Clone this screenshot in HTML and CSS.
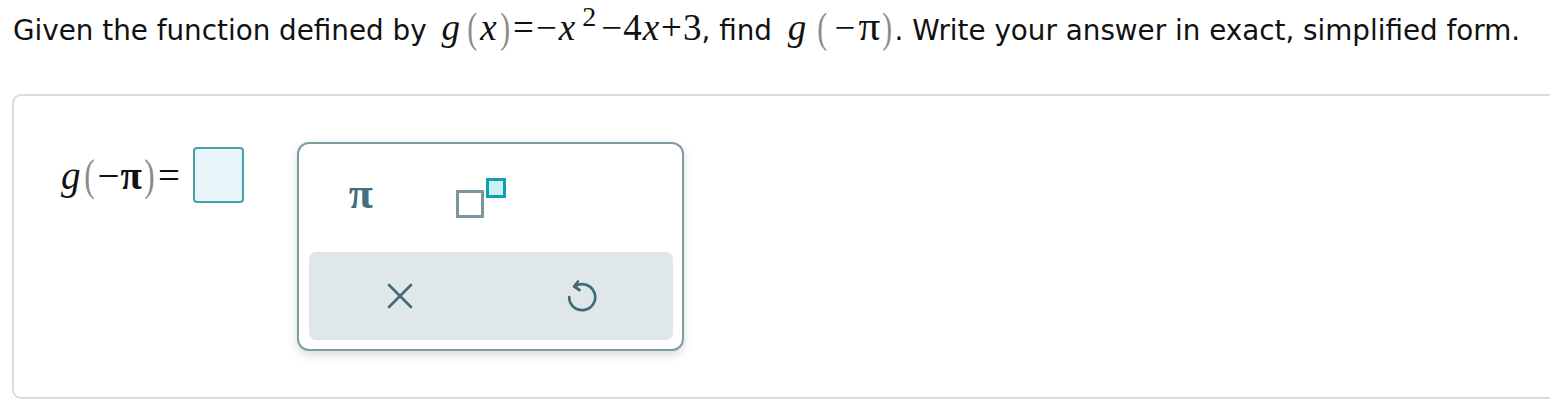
FILE: index.html
```html
<!DOCTYPE html>
<html>
<head>
<meta charset="utf-8">
<link rel="stylesheet" href="styles.css">
</head>
<body>
<div class="question">Given the function defined by <span class="math"><i class="v g">g</i><span class="paren p1">(</span><i class="v">x</i><span class="paren">)</span><span class="op">=</span><span class="neg">−</span><i class="v">x</i><span class="sup">2</span><span class="op">−</span>4<i class="v">x</i><span class="op">+</span>3</span>, find <span class="math m2"><i class="v g2">g</i><span class="paren">(</span><span class="neg">−</span><span class="tpi">π</span><span class="paren">)</span></span>. Write your answer in exact, simplified form.</div>
<div class="panel">
  <div class="answer">
    <span class="math big"><i class="v">g</i><span class="paren">(</span><span class="neg">−</span><b class="pi">π</b><span class="paren">)</span><span class="op">=</span></span>
    <span class="input"></span>
  </div>
  <div class="keypad">
    <div class="keys">
      <button class="key keypi">π</button>
      <button class="key keysup">
        <svg width="56" height="41" viewBox="0 0 56 41"><rect x="6.5" y="13.5" width="25" height="25" fill="#fff" stroke="#7a959c" stroke-width="3"/><rect x="36.5" y="1.5" width="17" height="17" fill="#cdeef3" stroke="#0e9fb5" stroke-width="3"/></svg>
      </button>
    </div>
    <div class="actions">
      <button class="act">
        <svg width="26" height="26" viewBox="0 0 26 26"><path d="M2 2 L24 24 M24 2 L2 24" stroke="#3f6b79" stroke-width="2.6" stroke-linecap="round" fill="none"/></svg>
      </button>
      <button class="act">
        <svg width="32" height="38" viewBox="0 0 32 38"><path d="M12 4.5 L8 9.5 L13.5 13 M8.6 9.6 A13 13 0 1 1 3.2 20" stroke="#3f6b79" stroke-width="2.7" stroke-linecap="round" stroke-linejoin="round" fill="none"/></svg>
      </button>
    </div>
  </div>
</div>
</body>
</html>
```
FILE: styles.css
```css
html, body {
  margin: 0;
  padding: 0;
  background: #fff;
}
body {
  width: 1550px;
  height: 410px;
  overflow: hidden;
  font-family: "DejaVu Sans", Verdana, sans-serif;
  color: #111;
}
.question {
  font-size: 27.8px;
  line-height: 30px;
  padding: 16px 0 0 13px;
  height: 94px;
  box-sizing: border-box;
  white-space: nowrap;
}
.math {
  font-family: "Liberation Serif", "Times New Roman", serif;
  font-size: 37px;
  line-height: 0;
  color: #111;
}
.math .v {
  font-style: italic;
  padding: 0 1px;
}
.math .g {
  margin-left: 5px;
}
.paren {
  display: inline-block;
  color: #8c8c8c;
  transform: scale(0.8, 1.15);
  transform-origin: 50% 65%;
  margin: 0 1px;
}
.p1 {
  margin-left: 5px;
}
.op {
  margin: 0 1px;
}
.neg {
  margin: 0 1px 0 1px;
}
.sup {
  display: inline-block;
  font-size: 28px;
  vertical-align: 14px;
  margin-left: 6px;
  margin-right: 4px;
}
.m2 .g2 {
  margin-left: 6px;
  margin-right: 8px;
}
.m2 .neg {
  margin: 0 3px 0 5px;
}
.m2 .tpi {
  font-size: 43px;
}
.panel {
  margin-left: 12px;
  margin-right: -30px;
  border: 2px solid #d3dedf;
  border-radius: 9px;
  display: flex;
  align-items: flex-start;
  padding: 46px 0 0 46px;
  box-sizing: border-box;
  height: 305px;
}
.answer {
  display: flex;
  align-items: center;
  margin-top: 5px;
}
.big {
  font-size: 39px;
  line-height: 1;
}
.pi {
  font-weight: bold;
}
.input {
  display: block;
  width: 47px;
  height: 52px;
  border: 2px solid #4a9fae;
  border-radius: 4px;
  background: #e7f4f8;
  margin-left: 12px;
}
.keypad {
  margin-left: 53px;
  width: 387px;
  height: 209px;
  box-sizing: border-box;
  border: 2px solid #7f9ca3;
  border-radius: 12px;
  background: #fff;
  box-shadow: 0 4px 10px rgba(40, 60, 70, 0.18);
  padding: 0 9px 9px 10px;
  display: flex;
  flex-direction: column;
}
.keys {
  flex: 1;
  display: flex;
  align-items: center;
  padding-left: 22px;
  gap: 58px;
}
button {
  border: 0;
  background: transparent;
  padding: 0;
  margin: 0;
  font: inherit;
}
.key {
  width: 60px;
  height: 60px;
  display: flex;
  align-items: center;
  justify-content: center;
}
.keypi {
  font-family: "Liberation Serif", "Times New Roman", serif;
  font-size: 44px;
  font-weight: bold;
  color: #41707e;
  padding-bottom: 10px;
  box-sizing: border-box;
}
.actions {
  height: 88px;
  background: #e0e7e8;
  border-radius: 7px;
  display: flex;
}
.act {
  flex: 1;
  display: flex;
  align-items: center;
  justify-content: center;
}
```
